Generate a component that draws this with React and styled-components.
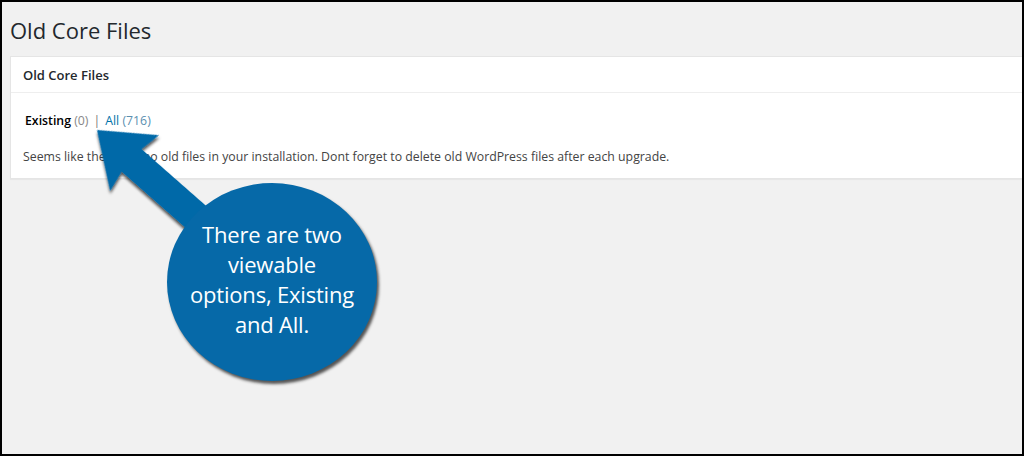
import React from "react";
import styled, { createGlobalStyle } from "styled-components";

const GlobalStyle = createGlobalStyle`
  html, body {
    margin: 0;
    padding: 0;
    background: #000;
  }
  body {
    font-family: "Open Sans", "Noto Sans", sans-serif;
  }
`;

const Frame = styled.div`
  position: relative;
  box-sizing: border-box;
  width: 1024px;
  height: 456px;
  border: 2px solid #000;
  background: #f1f1f1;
  padding: 0 0 0 8px;
  overflow: hidden;
`;

const PageTitle = styled.h1`
  margin: 0;
  padding: 14px 0 0 0;
  height: 54px;
  box-sizing: border-box;
  font-size: 22px;
  font-weight: 400;
  line-height: 29px;
  color: #23282d;
`;

const Card = styled.section`
  background: #fff;
  border: 1px solid #e5e5e5;
  border-right: none;
  box-shadow: 0 1px 1px rgba(0, 0, 0, 0.04);
`;

const CardHeader = styled.h2`
  margin: 0;
  height: 35px;
  padding: 0 12px;
  display: flex;
  align-items: center;
  border-bottom: 1px solid #eeeeee;
  font-size: 13px;
  font-weight: 600;
  color: #23282d;
`;

const CardBody = styled.div`
  padding: 19px 12px 12px 12px;
  height: 85px;
  box-sizing: border-box;
  display: flex;
  flex-direction: column;
  gap: 18px;
`;

const Tabs = styled.ul`
  list-style: none;
  margin: 0;
  padding: 0 0 0 2px;
  display: flex;
  align-items: center;
  font-size: 12.3px;
  line-height: 18px;
`;

const Tab = styled.li`
  color: ${(props) => (props.$active ? "#000" : "#0073aa")};
  font-weight: ${(props) => (props.$active ? 600 : 400)};
`;

const Count = styled.span`
  font-weight: 400;
  color: ${(props) => (props.$link ? "#5b8fb0" : "#888")};
`;

const Sep = styled.li`
  color: #777;
  margin: 0 5px;
`;

const Notice = styled.p`
  margin: 0;
  font-size: 12.3px;
  line-height: 18px;
  color: #444;
`;

const Overlay = styled.svg`
  position: absolute;
  top: -2px;
  left: -2px;
  width: 1024px;
  height: 456px;
  pointer-events: none;
`;

const Bubble = styled.div`
  position: absolute;
  left: 165px;
  top: 181px;
  width: 210px;
  height: 198px;
  border-radius: 50%;
  background: #0669a8;
  box-shadow: 2px 3px 3px rgba(0, 0, 0, 0.65);
  display: flex;
  align-items: center;
  justify-content: center;
  text-align: center;
  color: #fff;
  font-family: "Open Sans", "Noto Sans", sans-serif;
  font-size: 22px;
  line-height: 30px;
  letter-spacing: -0.2px;
  padding-bottom: 6px;
  box-sizing: border-box;
`;

export default function App() {
  return (
    <>
      <GlobalStyle />
      <Frame>
        <PageTitle>Old Core Files</PageTitle>
        <Card>
          <CardHeader>Old Core Files</CardHeader>
          <CardBody>
            <Tabs>
              <Tab $active>
                Existing <Count>(0)</Count>
              </Tab>
              <Sep>|</Sep>
              <Tab>
                All <Count $link>(716)</Count>
              </Tab>
            </Tabs>
            <Notice>
              Seems like there are no old files in your installation. Dont
              forget to delete old WordPress files after each upgrade.
            </Notice>
          </CardBody>
        </Card>
        <Overlay viewBox="0 0 1024 456">
          <defs>
            <filter id="arrowShadow" x="-20%" y="-20%" width="140%" height="140%">
              <feDropShadow dx="2" dy="2" stdDeviation="1.5" floodColor="#000" floodOpacity="0.7" />
            </filter>
          </defs>
          <g transform="translate(97 130) rotate(41.3)" filter="url(#arrowShadow)">
            <path
              d="M0 0 L50 -37 L46 -15 L235 -15 L235 15 L46 15 L50 37 Z"
              fill="#0669a8"
            />
          </g>
        </Overlay>
        <Bubble>
          There are two
          <br />
          viewable
          <br />
          options, Existing
          <br />
          and All.
        </Bubble>
      </Frame>
    </>
  );
}
